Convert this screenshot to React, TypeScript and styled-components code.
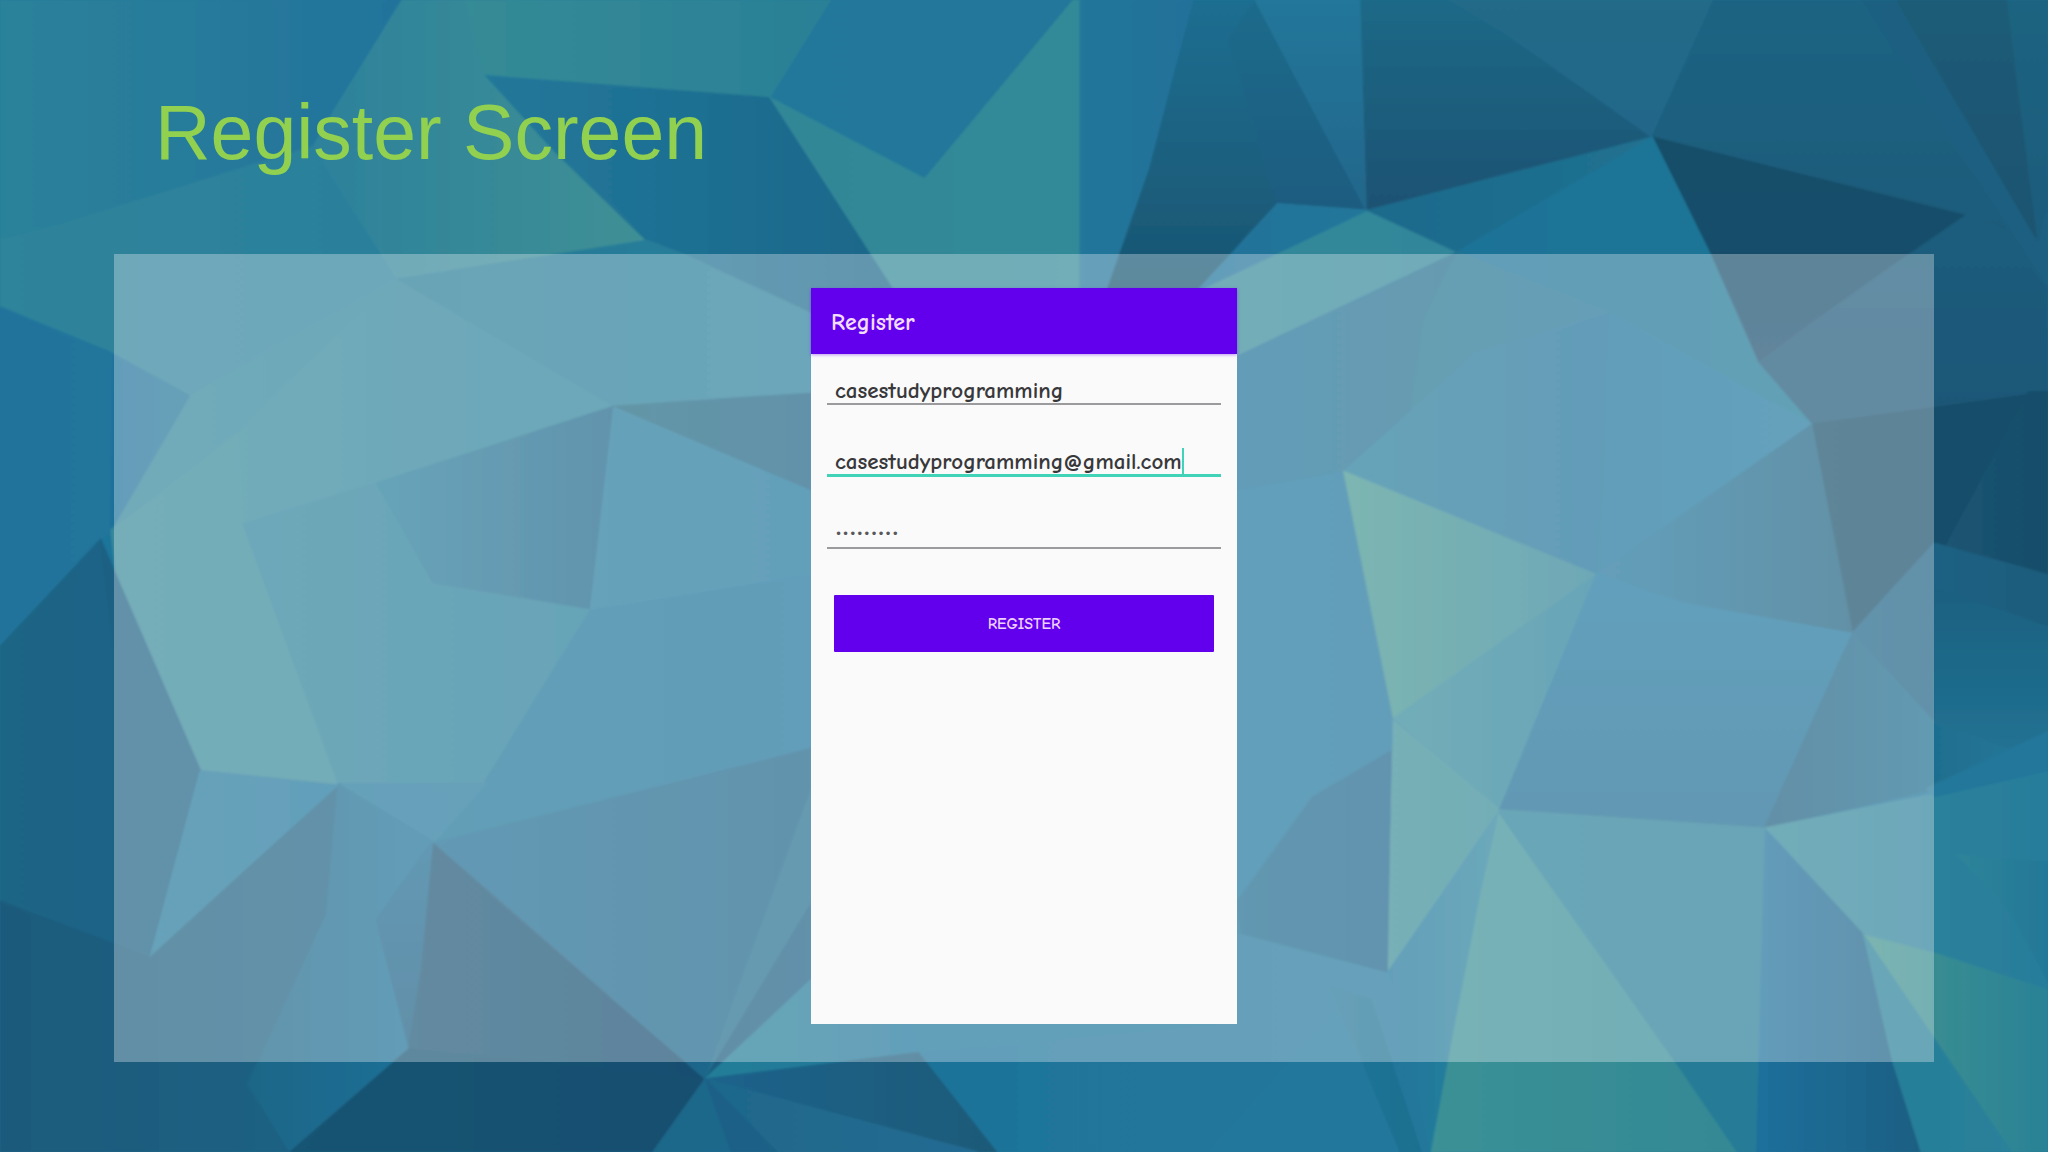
import React from "react";
import styled, { createGlobalStyle } from "styled-components";

const GlobalStyle = createGlobalStyle`
  *, *::before, *::after { box-sizing: border-box; }
  body { margin: 0; background: #20749a; font-family: "Liberation Sans", Arial, sans-serif; }
`;

const Slide = styled.div`
  position: relative;
  min-height: 100vh;
  padding: 88px 114px 90px;
  display: flex;
  flex-direction: column;
  overflow: hidden;
`;

const Backdrop = styled.svg`
  position: absolute;
  inset: 0;
  width: 100%;
  height: 100%;
`;

const Title = styled.h1`
  position: relative;
  margin: 0 0 78px;
  padding-left: 41px;
  font-size: 77px;
  line-height: 88px;
  font-weight: 400;
  color: #92d050;
`;

const Panel = styled.main`
  position: relative;
  flex: 1;
  display: flex;
  justify-content: center;
  padding: 34px 24px 38px;
  background: rgba(255, 255, 255, 0.31);
`;

const Phone = styled.section`
  width: 426px;
  display: flex;
  flex-direction: column;
  background: #fafafa;
  font-family: "Comic Neue", Lato, cursive;
`;

const AppBar = styled.header`
  display: flex;
  align-items: center;
  height: 66px;
  padding: 2px 20px 0;
  background: #6200ee;
  box-shadow: 0 1px 3px rgba(98, 0, 238, 0.4);
`;

const AppTitle = styled.h2`
  margin: 0;
  font-size: 24px;
  line-height: 28px;
  font-weight: 700;
  color: #f3dcff;
`;

const Form = styled.form`
  display: flex;
  flex-direction: column;
  padding: 17px 16px;
`;

const Field = styled.div<{ $active?: boolean }>`
  display: flex;
  align-items: flex-end;
  height: 34px;
  margin-bottom: 38px;
  padding: 0 8px;
  border-bottom: ${(p) => (p.$active ? "3px solid #40d3b8" : "2px solid #9b9b9e")};
`;

const Input = styled.input<{ $hug?: boolean }>`
  min-width: 0;
  ${(p) => (p.$hug ? "field-sizing: content;" : "flex: 1;")}
  height: 28px;
  padding: 2px 0 0;
  border: 0;
  outline: 0;
  background: transparent;
  color: #38383b;
  font-family: inherit;
  font-size: 23px;
  font-weight: 700;

  &[type="password"] {
    font-family: "DejaVu Sans", sans-serif;
    font-size: 12px;
    font-weight: 400;
    color: #58585b;
  }
`;

const Caret = styled.span`
  width: 2px;
  height: 26px;
  background: #40d3b8;
`;

const Submit = styled.button`
  height: 57px;
  margin: 8px 7px 0;
  border: 0;
  border-radius: 1px;
  background: #6200ee;
  color: #efd0ff;
  font-family: inherit;
  font-size: 16px;
  font-weight: 700;
  text-transform: uppercase;
`;

type Facet = { p: string; a: string; b?: string; v?: boolean };

/* v: the shade runs from top to bottom, otherwise from left to right */
const facets: Facet[] = [
  // upper left
  { p: "0,0 308,0 256,84 240,112 205,125 133,145 44,173 0,184", a: "#2c829a", b: "#22739b" },
  { p: "308,0 357,0 372,58 424,115 495,184 303,214 240,112 256,84", a: "#2d829b", b: "#3f9095" },
  { p: "0,184 44,173 133,145 240,112 303,214 145,303 85,270 0,235", a: "#2e849a", b: "#2c809b" },
  { p: "0,235 85,270 145,303 85,406 77,413 0,495", a: "#20739b", b: "#20759b" },
  { p: "357,0 637,0 590,75 372,60", a: "#358b96", b: "#2a8096" },
  { p: "372,58 590,75 685,222 621,240 524,195 495,184 424,115", a: "#21789a", b: "#1d678a" },
  { p: "637,0 822,0 708,137 590,75", a: "#23789a", b: "#22779a" },
  { p: "590,75 708,137 822,0 827,0 827,230 685,222", a: "#308797", b: "#338a98" },
  { p: "827,0 914,0 880,130 845,230 827,230", a: "#20769a", b: "#21719a" },
  // upper right
  { p: "914,0 961,0 1047,161 978,156 917,222 845,230 880,130", a: "#1f6e91", b: "#185470", v: true },
  { p: "940,30 961,0 1047,161 978,156", a: "#1f6b8c", b: "#1c5c80", v: true },
  { p: "961,0 1043,0 1046,161", a: "#20779a", b: "#22668b", v: true },
  { p: "1042,0 1110,0 1152,25 1265,105 1047,161", a: "#1f6987", b: "#1a5273", v: true },
  { p: "1110,0 1312,0 1265,105 1152,25", a: "#216a88", b: "#20668a", v: true },
  { p: "1312,0 1568,0 1568,205 1500,165 1265,105", a: "#1b6483", b: "#1d5979", v: true },
  { p: "1265,105 1505,165 1440,210 1346,278 1309,194", a: "#174d68", b: "#1a4f6f", v: true },
  { p: "1505,165 1568,190 1568,310 1387,325 1346,278 1440,210", a: "#1d5c7d", b: "#1b5777", v: true },
  { p: "1425,0 1450,0 1568,165 1568,220", a: "#1d6081", b: "#1e5e80" },
  { p: "1452,0 1537,0 1560,184", a: "#1b5c77", b: "#1b5370", v: true },
  { p: "1537,0 1568,0 1568,150 1560,184", a: "#1c6481", b: "#1c5b7c", v: true },
  { p: "1385,325 1568,300 1568,490 1481,480 1418,485", a: "#194f6a", b: "#194d6a" },
  { p: "1553,300 1568,300 1568,490 1481,490 1481,435", a: "#1b5574", b: "#184d69" },
  { p: "1418,485 1481,416 1568,440 1568,595 1481,560", a: "#1d6488", b: "#1d5c7c" },
  { p: "1481,450 1568,480 1568,600 1481,620", a: "#1d6080", b: "#22789a", v: true },
  // right of the centre
  { p: "978,156 1047,161 947,226 910,230", a: "#1f719a", b: "#22779a" },
  { p: "1047,162 1116,193 947,280 900,232", a: "#368a99", b: "#30869a" },
  { p: "1047,161 1265,105 1116,193", a: "#1f6a8c", b: "#207190" },
  { p: "1265,105 1309,194 1346,278 1387,325 1222,440 1029,361 947,376 947,273 1116,193", a: "#1f709a", b: "#1f7795" },
  { p: "1116,193 1105,250 1150,298 1029,361 947,376 947,273", a: "#1f7098", b: "#216d8b" },
  { p: "1116,193 1232,240 1130,270 1080,315 1090,245", a: "#22748f", b: "#217398" },
  { p: "1029,361 1130,270 1232,240 1222,440", a: "#237b99", b: "#1f6f98" },
  { p: "1232,240 1387,325 1225,438", a: "#1f729a", b: "#2078a0" },
  { p: "947,376 1029,361 1067,550 1063,640 947,690", a: "#1f759b", b: "#1f739a" },
  { p: "1225,438 1387,325 1418,485 1289,462", a: "#20739b", b: "#1d6180" },
  { p: "1029,361 1222,440 1067,550", a: "#43958f", b: "#2e8297" },
  { p: "1222,440 1148,620 1067,550", a: "#34899a", b: "#257d98" },
  { p: "1067,552 1148,620 1062,745", a: "#3c8d97", b: "#368a96" },
  { p: "1222,440 1289,462 1418,485 1351,634 1148,620", a: "#1f769f", b: "#1f6a91", v: true },
  { p: "1418,485 1481,553 1568,585 1351,634", a: "#1c5e80", b: "#22799a" },
  { p: "1351,634 1481,608 1568,590 1568,762 1427,716", a: "#34889a", b: "#277d9b" },
  { p: "1475,604 1568,560 1568,590 1481,610", a: "#22789a", b: "#22779a" },
  { p: "1500,655 1568,660 1568,752 1540,700", a: "#2e8499", b: "#237898" },
  { p: "1351,634 1427,716 1449,812 1471,882 1343,882", a: "#1e709c", b: "#1c5f83" },
  { p: "1148,620 1351,634 1344,882 1325,882", a: "#277f98", b: "#257b97" },
  { p: "1147,622 1181,671 1281,812 1329,882 1095,882 1113,786 1133,684", a: "#3b9196", b: "#348995" },
  { p: "1147,622 1133,684 1113,786 1095,882 1085,882 1062,745", a: "#1f759b", b: "#2a829b" },
  { p: "1427,716 1481,730 1568,758 1568,882 1540,882", a: "#41938f", b: "#2a8296" },
  { p: "1427,716 1540,882 1471,882 1449,812", a: "#267e98", b: "#2a819a" },
  { p: "1005,610 1065,575 1062,745 950,715 947,690", a: "#1e6a8e", b: "#1c648c" },
  { p: "947,715 1062,745 1095,882 763,882 703,806 947,784", a: "#1f739a", b: "#22779b" },
  { p: "1022,775 1077,882 925,882", a: "#23779d", b: "#23779d" },
  { p: "1018,755 1050,765 1088,882 1072,882", a: "#217599", b: "#1d708f" },
  // left
  { p: "303,214 495,184 524,195 621,240 621,301 470,312", a: "#257a96", b: "#2a7f9b" },
  { p: "303,214 470,312 287,370 186,401 85,406 145,303", a: "#31859a", b: "#2b819a" },
  { p: "145,303 85,406 87,272", a: "#1f719b", b: "#247699" },
  { p: "470,311 621,301 621,376", a: "#1f6880", b: "#1c6284" },
  { p: "470,311 452,467 331,447 287,370", a: "#247b9a", b: "#1d6488" },
  { p: "470,312 621,376 621,450 452,467", a: "#23799b", b: "#1f769b" },
  { p: "182,332 303,214 287,370 186,401", a: "#33879a", b: "#2e839a" },
  { p: "85,406 182,332 186,401 226,510 259,600 153,589 89,441", a: "#37899a", b: "#368899" },
  { p: "186,401 287,370 331,447 452,467 370,610 259,600 226,510", a: "#2c829a", b: "#247b98" },
  { p: "452,467 621,440 621,575 332,645 370,600", a: "#1f7497", b: "#1f729a" },
  { p: "259,600 372,600 332,645", a: "#20779b", b: "#20769a" },
  { p: "77,413 89,441 153,589 115,735 0,690 0,495", a: "#1c6584", b: "#1b638b" },
  { p: "77,413 89,441 153,589 115,735 87,728 87,500", a: "#1a6083", b: "#1b6085" },
  { p: "153,591 259,602 115,733", a: "#22799a", b: "#1f759b" },
  { p: "115,733 259,602 245,882 0,882 0,690", a: "#1a5a7b", b: "#1d6284" },
  { p: "259,600 332,645 324,740 313,801 222,882 190,830 250,700", a: "#1d6688", b: "#1d7198" },
  { p: "288,704 330,645 325,770 313,801", a: "#1d6b92", b: "#1a5e83", v: true },
  { p: "332,645 540,826 313,803 323,740", a: "#1a5676", b: "#194e70" },
  { p: "313,803 540,826 500,882 222,882", a: "#195473", b: "#194f70" },
  { p: "332,645 621,573 621,690 540,826", a: "#1e6c93", b: "#1b6488" },
  { p: "621,605 621,692 548,826 540,826", a: "#206d8d", b: "#206d8d" },
  { p: "621,692 621,752 540,826", a: "#1c5c80", b: "#1b6085" },
  { p: "621,750 690,760 703,806 540,826", a: "#257f98", b: "#1f759b" },
  { p: "540,826 703,806 763,882 748,882", a: "#1a638c", b: "#1d5a78" },
  { p: "540,826 748,882 500,882", a: "#1e678a", b: "#246b92" },
  { p: "540,826 595,882 560,882", a: "#1c6088", b: "#1b6287" },
];

function Facets() {
  return (
    <Backdrop viewBox="0 0 1568 882" preserveAspectRatio="xMidYMid slice" aria-hidden="true">
      <defs>
        <filter id="soften" x="0" y="0" width="1" height="1">
          <feGaussianBlur stdDeviation="1" edgeMode="duplicate" />
        </filter>
        {facets.map((f, i) => (
          <linearGradient key={i} id={`shade${i}`} x1="0" y1="0" x2={f.v ? "0" : "1"} y2={f.v ? "1" : "0"}>
            <stop offset="0" stopColor={f.a} />
            <stop offset="1" stopColor={f.b ?? f.a} />
          </linearGradient>
        ))}
      </defs>
      <g filter="url(#soften)">
        <rect x="-10" y="-10" width="1588" height="902" fill="#1f749a" />
        {facets.map((f, i) => (
          <polygon key={i} points={f.p} fill={`url(#shade${i})`} stroke={`url(#shade${i})`} strokeWidth="1" />
        ))}
      </g>
    </Backdrop>
  );
}

export default function App() {
  return (
    <Slide>
      <GlobalStyle />
      <Facets />
      <Title>Register Screen</Title>
      <Panel>
        <Phone>
          <AppBar>
            <AppTitle>Register</AppTitle>
          </AppBar>
          <Form onSubmit={(e) => e.preventDefault()}>
            <Field>
              <Input aria-label="Username" type="text" defaultValue="casestudyprogramming" spellCheck={false} />
            </Field>
            <Field $active>
              <Input
                $hug
                aria-label="Email"
                type="email"
                defaultValue="casestudyprogramming@gmail.com"
                spellCheck={false}
              />
              <Caret />
            </Field>
            <Field>
              <Input aria-label="Password" type="password" defaultValue="123456789" />
            </Field>
            <Submit type="submit">Register</Submit>
          </Form>
        </Phone>
      </Panel>
    </Slide>
  );
}
